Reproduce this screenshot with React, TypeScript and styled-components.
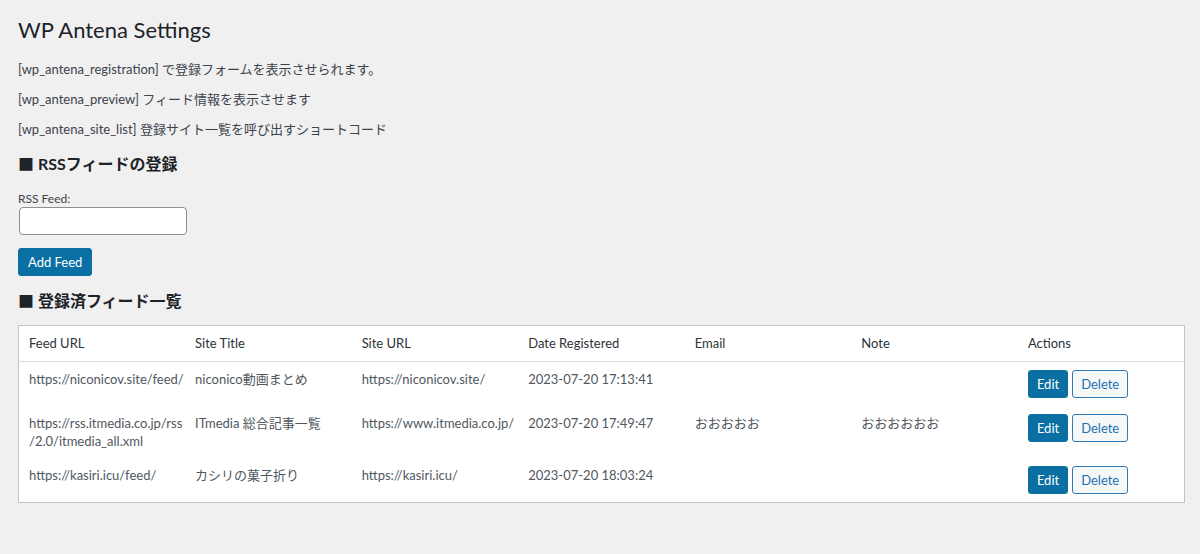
import React from 'react';
import styled, { createGlobalStyle } from 'styled-components';

const GlobalStyle = createGlobalStyle`
  html, body {
    margin: 0;
    padding: 0;
    background: #f0f0f1;
  }
  body {
    font-family: Lato, "Noto Sans CJK JP", sans-serif;
    font-size: 13px;
    color: #3c434a;
  }
`;

const Wrap = styled.div`
  padding: 15px 15px 40px 18px;
`;

const Title = styled.h1`
  margin: 0 0 15px;
  font-size: 22px;
  font-weight: 400;
  line-height: 29px;
  color: #1d2327;
`;

const Note = styled.p`
  margin: 0 0 10px;
  font-size: 13px;
  line-height: 20px;
`;

const SectionTitle = styled.h3<{ $top: number }>`
  margin: ${(p) => p.$top}px 0 0;
  font-size: 16px;
  font-weight: 700;
  line-height: 24px;
  color: #1d2327;
`;

const Form = styled.form`
  display: flex;
  flex-direction: column;
  align-items: flex-start;
  margin-top: 15px;
`;

const Label = styled.label`
  font-size: 12px;
  line-height: 16px;
`;

const Input = styled.input`
  box-sizing: border-box;
  width: 168px;
  height: 28px;
  margin: 0 0 0 1px;
  padding: 0 8px;
  border: 1px solid #8c8f94;
  border-radius: 4px;
  background: #fff;
  font: inherit;
`;

const Button = styled.button<{ $variant?: 'primary' | 'secondary' }>`
  box-sizing: border-box;
  height: 28px;
  padding: 0 8px;
  border-radius: 3px;
  font-family: inherit;
  font-size: 13px;
  line-height: 26px;
  cursor: pointer;
  border: 1px solid ${(p) => (p.$variant === 'secondary' ? '#2f7cb5' : '#0a6fa3')};
  background: ${(p) => (p.$variant === 'secondary' ? '#f6f7f7' : '#0a6fa3')};
  color: ${(p) => (p.$variant === 'secondary' ? '#2271b1' : '#fff')};
`;

const AddButton = styled(Button)`
  margin-top: 13px;
  padding: 0 9px;
`;

const Table = styled.table`
  margin-top: 12px;
  width: 100%;
  table-layout: fixed;
  border-collapse: collapse;
  background: #fff;
  border: 1px solid #c3c4c7;
`;

const Th = styled.th`
  padding: 8px 10px;
  text-align: left;
  font-weight: 400;
  font-size: 13px;
  line-height: 19px;
  color: #2c3338;
  border-bottom: 1px solid #dcdcde;
`;

const Td = styled.td`
  padding: 8px 10px;
  vertical-align: top;
  font-size: 13px;
  line-height: 18px;
  color: #50575e;
`;

const Actions = styled.div`
  display: flex;
  gap: 4px;
`;

type Feed = {
  feedUrl: React.ReactNode;
  title: string;
  siteUrl: string;
  date: string;
  email: string;
  note: string;
};

const feeds: Feed[] = [
  {
    feedUrl: 'https://niconicov.site/feed/',
    title: 'niconico動画まとめ',
    siteUrl: 'https://niconicov.site/',
    date: '2023-07-20 17:13:41',
    email: '',
    note: '',
  },
  {
    feedUrl: (
      <>
        https://rss.itmedia.co.jp/rss<wbr />/2.0/itmedia_all.xml
      </>
    ),
    title: 'ITmedia 総合記事一覧',
    siteUrl: 'https://www.itmedia.co.jp/',
    date: '2023-07-20 17:49:47',
    email: 'おおおおお',
    note: 'おおおおおお',
  },
  {
    feedUrl: 'https://kasiri.icu/feed/',
    title: 'カシリの菓子折り',
    siteUrl: 'https://kasiri.icu/',
    date: '2023-07-20 18:03:24',
    email: '',
    note: '',
  },
];

const columns = ['Feed URL', 'Site Title', 'Site URL', 'Date Registered', 'Email', 'Note', 'Actions'];

export default function App() {
  return (
    <>
      <GlobalStyle />
      <Wrap>
        <Title>WP Antena Settings</Title>
        <Note>[wp_antena_registration] で登録フォームを表示させられます。</Note>
        <Note>[wp_antena_preview] フィード情報を表示させます</Note>
        <Note>[wp_antena_site_list] 登録サイト一覧を呼び出すショートコード</Note>

        <SectionTitle $top={13}>■ RSSフィードの登録</SectionTitle>
        <Form onSubmit={(e) => e.preventDefault()}>
          <Label htmlFor="rss-feed">RSS Feed:</Label>
          <Input id="rss-feed" type="text" />
          <AddButton type="submit">Add Feed</AddButton>
        </Form>

        <SectionTitle $top={13}>■ 登録済フィード一覧</SectionTitle>
        <Table>
          <thead>
            <tr>
              {columns.map((c) => (
                <Th key={c}>{c}</Th>
              ))}
            </tr>
          </thead>
          <tbody>
            {feeds.map((f, i) => (
              <tr key={i}>
                <Td>{f.feedUrl}</Td>
                <Td>{f.title}</Td>
                <Td>{f.siteUrl}</Td>
                <Td>{f.date}</Td>
                <Td>{f.email}</Td>
                <Td>{f.note}</Td>
                <Td>
                  <Actions>
                    <Button type="button">Edit</Button>
                    <Button type="button" $variant="secondary">
                      Delete
                    </Button>
                  </Actions>
                </Td>
              </tr>
            ))}
          </tbody>
        </Table>
      </Wrap>
    </>
  );
}
